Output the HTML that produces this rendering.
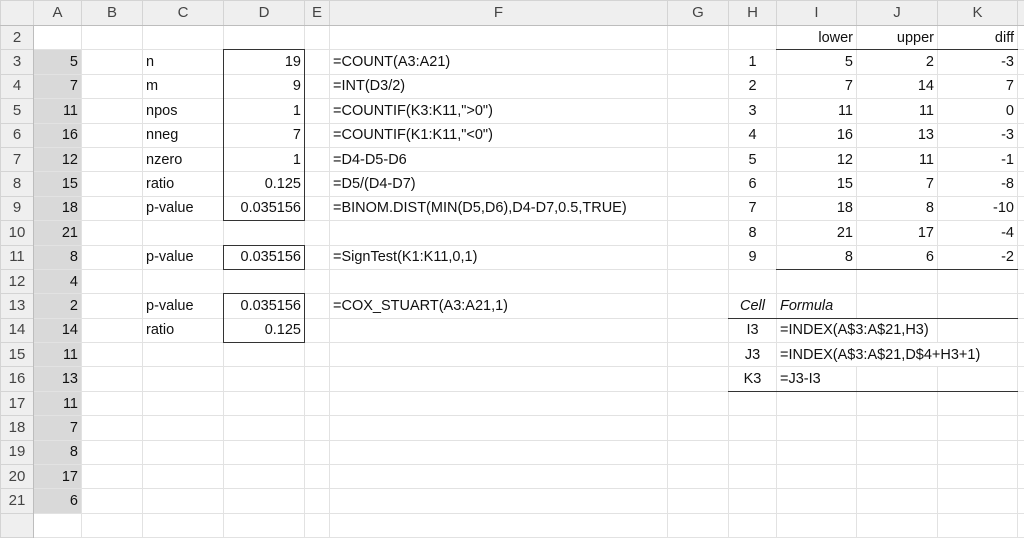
<!DOCTYPE html>
<html><head><meta charset="utf-8"><style>
body{margin:0;background:#fff;width:1024px;height:520px;overflow:hidden;font-family:"Liberation Sans",sans-serif;font-size:14.5px;color:#111}
table{border-collapse:collapse;table-layout:fixed;position:absolute;left:0;top:0;width:1024px}
td{border:1px solid #e2e2e2;padding:0 3px;white-space:nowrap;overflow:visible;vertical-align:middle;line-height:16px;height:23.4px}
tr.h td{background:#efefef;color:#444;text-align:center;height:24px;border-color:#d4d4d4;border-bottom:1px double #bdbdbd;font-size:15px}
td.rh{background:#efefef;color:#444;text-align:center;border-color:#d4d4d4;border-right:1px double #bdbdbd;padding:0;font-size:15px}
td.a{background:#d9d9d9;text-align:right}
.r{text-align:right}.c{text-align:center}.i{font-style:italic}
td.bb{border-bottom:1px double #333}
td.bx{border-left:1px double #333;border-right:1px double #333}
td.bt{border-top:1px double #333}
td.nr{border-right-style:hidden}
</style></head><body>
<table>
<colgroup><col style="width:33px"><col style="width:48px"><col style="width:61px"><col style="width:81px"><col style="width:81px"><col style="width:25px"><col style="width:338px"><col style="width:61px"><col style="width:48px"><col style="width:80px"><col style="width:81px"><col style="width:80px"><col style="width:7px"></colgroup>
<tr class="h"><td></td><td>A</td><td>B</td><td>C</td><td>D</td><td>E</td><td>F</td><td>G</td><td>H</td><td>I</td><td>J</td><td>K</td><td></td></tr>
<tr><td class="rh">2</td><td></td><td></td><td></td><td></td><td></td><td></td><td></td><td></td><td class="r bb">lower</td><td class="r bb">upper</td><td class="r bb">diff</td><td></td></tr>
<tr><td class="rh">3</td><td class="a">5</td><td></td><td>n</td><td class="r bx bt">19</td><td></td><td>=COUNT(A3:A21)</td><td></td><td class="c">1</td><td class="r">5</td><td class="r">2</td><td class="r">-3</td><td></td></tr>
<tr><td class="rh">4</td><td class="a">7</td><td></td><td>m</td><td class="r bx">9</td><td></td><td>=INT(D3/2)</td><td></td><td class="c">2</td><td class="r">7</td><td class="r">14</td><td class="r">7</td><td></td></tr>
<tr><td class="rh">5</td><td class="a">11</td><td></td><td>npos</td><td class="r bx">1</td><td></td><td>=COUNTIF(K3:K11,"&gt;0")</td><td></td><td class="c">3</td><td class="r">11</td><td class="r">11</td><td class="r">0</td><td></td></tr>
<tr><td class="rh">6</td><td class="a">16</td><td></td><td>nneg</td><td class="r bx">7</td><td></td><td>=COUNTIF(K1:K11,"&lt;0")</td><td></td><td class="c">4</td><td class="r">16</td><td class="r">13</td><td class="r">-3</td><td></td></tr>
<tr><td class="rh">7</td><td class="a">12</td><td></td><td>nzero</td><td class="r bx">1</td><td></td><td>=D4-D5-D6</td><td></td><td class="c">5</td><td class="r">12</td><td class="r">11</td><td class="r">-1</td><td></td></tr>
<tr><td class="rh">8</td><td class="a">15</td><td></td><td>ratio</td><td class="r bx">0.125</td><td></td><td>=D5/(D4-D7)</td><td></td><td class="c">6</td><td class="r">15</td><td class="r">7</td><td class="r">-8</td><td></td></tr>
<tr><td class="rh">9</td><td class="a">18</td><td></td><td>p-value</td><td class="r bx bb">0.035156</td><td></td><td>=BINOM.DIST(MIN(D5,D6),D4-D7,0.5,TRUE)</td><td></td><td class="c">7</td><td class="r">18</td><td class="r">8</td><td class="r">-10</td><td></td></tr>
<tr><td class="rh">10</td><td class="a">21</td><td></td><td></td><td></td><td></td><td></td><td></td><td class="c">8</td><td class="r">21</td><td class="r">17</td><td class="r">-4</td><td></td></tr>
<tr><td class="rh">11</td><td class="a">8</td><td></td><td>p-value</td><td class="r bx bt bb">0.035156</td><td></td><td>=SignTest(K1:K11,0,1)</td><td></td><td class="c">9</td><td class="r bb">8</td><td class="r bb">6</td><td class="r bb">-2</td><td></td></tr>
<tr><td class="rh">12</td><td class="a">4</td><td></td><td></td><td></td><td></td><td></td><td></td><td></td><td></td><td></td><td></td><td></td></tr>
<tr><td class="rh">13</td><td class="a">2</td><td></td><td>p-value</td><td class="r bx bt">0.035156</td><td></td><td>=COX_STUART(A3:A21,1)</td><td></td><td class="c i bb">Cell</td><td class="i bb">Formula</td><td class="bb"></td><td class="bb"></td><td></td></tr>
<tr><td class="rh">14</td><td class="a">14</td><td></td><td>ratio</td><td class="r bx bb">0.125</td><td></td><td></td><td></td><td class="c">I3</td><td class="nr">=INDEX(A$3:A$21,H3)</td><td></td><td></td><td></td></tr>
<tr><td class="rh">15</td><td class="a">11</td><td></td><td></td><td></td><td></td><td></td><td></td><td class="c">J3</td><td class="nr">=INDEX(A$3:A$21,D$4+H3+1)</td><td class="nr"></td><td></td><td></td></tr>
<tr><td class="rh">16</td><td class="a">13</td><td></td><td></td><td></td><td></td><td></td><td></td><td class="c bb">K3</td><td class="bb">=J3-I3</td><td class="bb"></td><td class="bb"></td><td></td></tr>
<tr><td class="rh">17</td><td class="a">11</td><td></td><td></td><td></td><td></td><td></td><td></td><td></td><td></td><td></td><td></td><td></td></tr>
<tr><td class="rh">18</td><td class="a">7</td><td></td><td></td><td></td><td></td><td></td><td></td><td></td><td></td><td></td><td></td><td></td></tr>
<tr><td class="rh">19</td><td class="a">8</td><td></td><td></td><td></td><td></td><td></td><td></td><td></td><td></td><td></td><td></td><td></td></tr>
<tr><td class="rh">20</td><td class="a">17</td><td></td><td></td><td></td><td></td><td></td><td></td><td></td><td></td><td></td><td></td><td></td></tr>
<tr><td class="rh">21</td><td class="a">6</td><td></td><td></td><td></td><td></td><td></td><td></td><td></td><td></td><td></td><td></td><td></td></tr>
<tr><td class="rh"></td><td></td><td></td><td></td><td></td><td></td><td></td><td></td><td></td><td></td><td></td><td></td><td></td></tr>
</table>
</body></html>
